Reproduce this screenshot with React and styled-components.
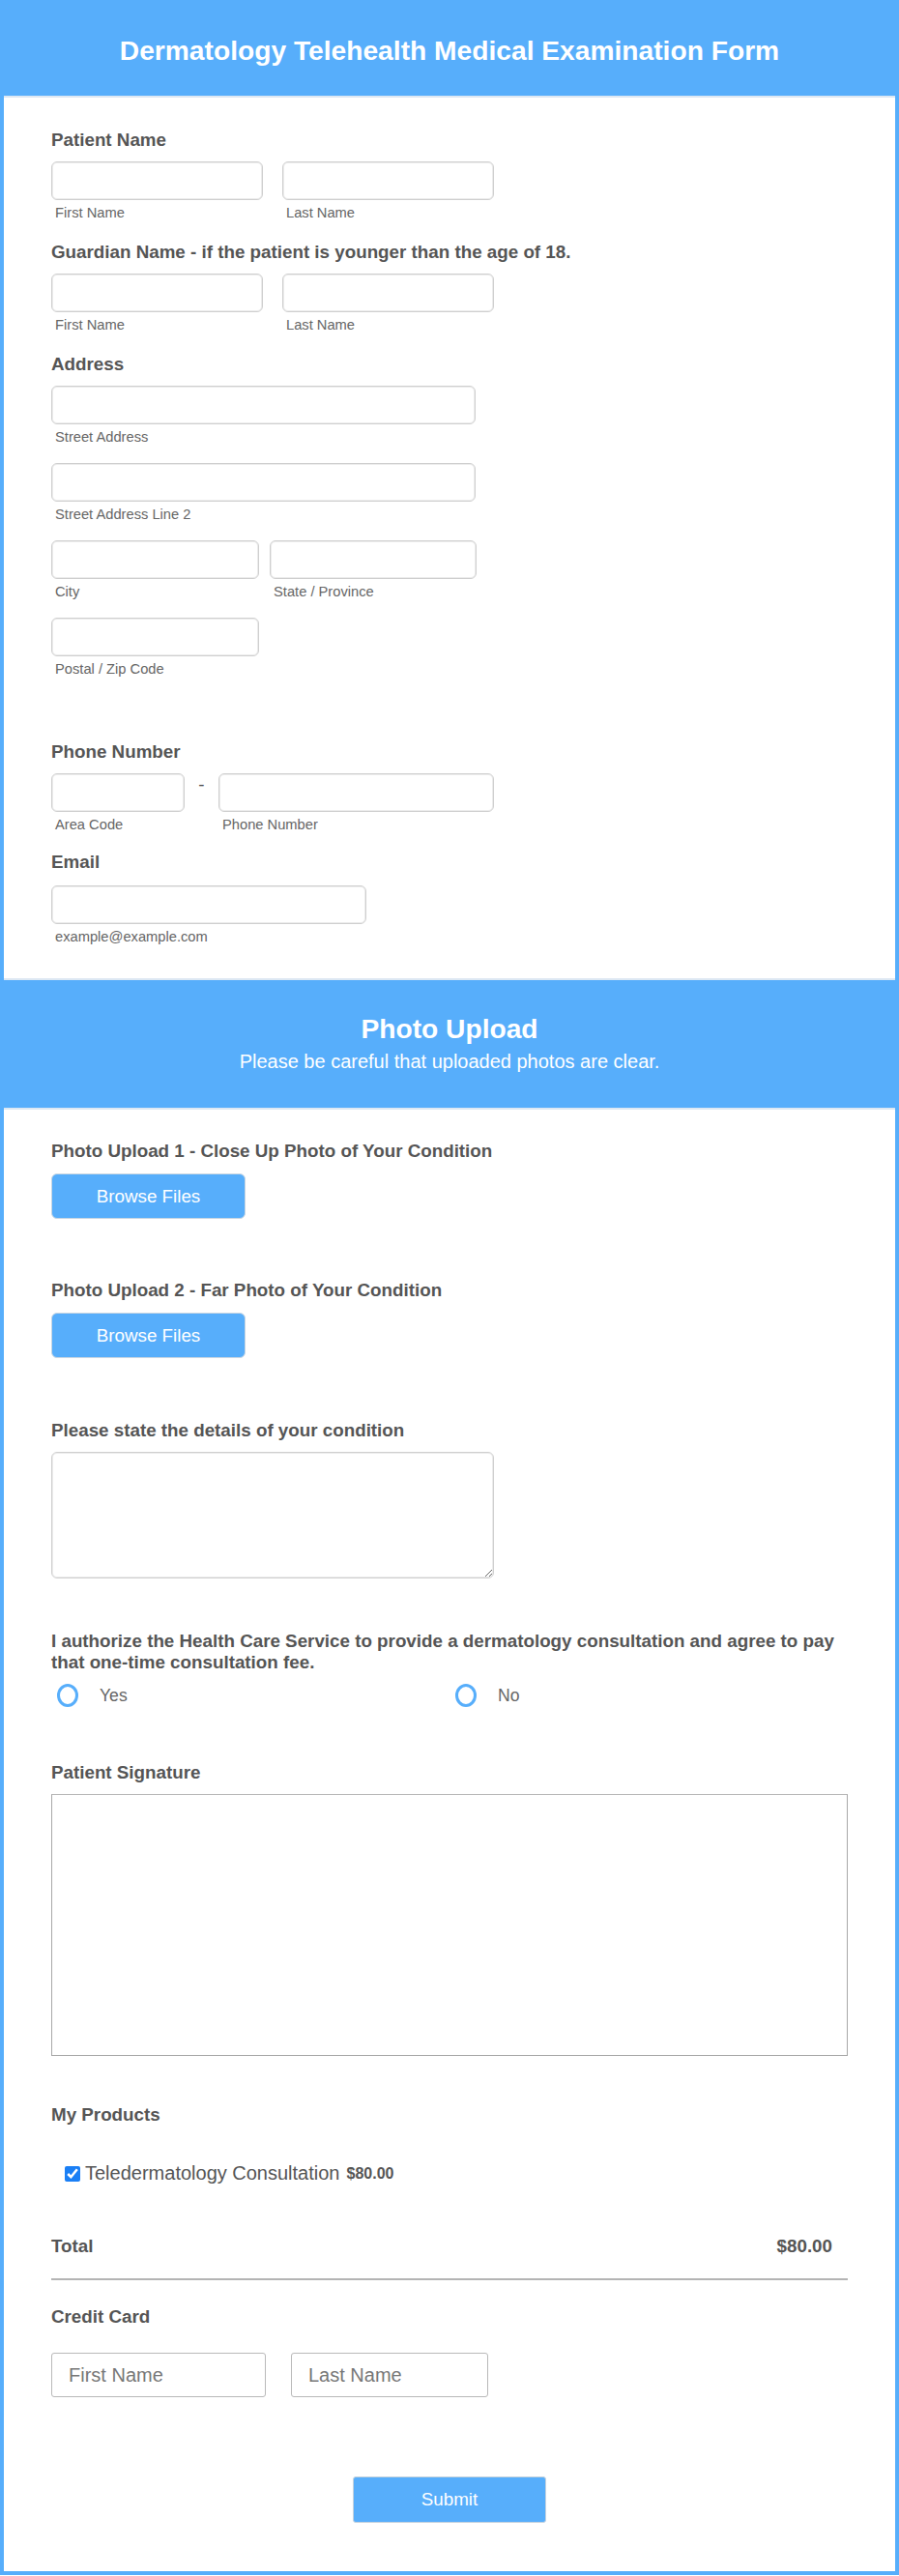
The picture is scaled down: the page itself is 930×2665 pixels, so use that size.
import React from 'react';
import styled, { createGlobalStyle } from 'styled-components';

const GlobalStyle = createGlobalStyle`
  * { box-sizing: border-box; }
  body {
    margin: 0;
    background: #fff;
    font-family: "Liberation Sans", Arial, Helvetica, sans-serif;
  }
`;

const BLUE = '#57aefb';

const FormShell = styled.form`
  width: 930px;
  border: 4px solid ${BLUE};
  background: #fff;
`;

const Band = styled.div`
  background: ${BLUE};
  color: #fff;
  text-align: center;
  border-top: ${(p) => (p.$topLine ? '2px solid #dde8f3' : 'none')};
  border-bottom: 2px solid #dde8f3;
  padding: ${(p) => p.$pad};
`;

const BandTitle = styled.h1`
  margin: 0;
  font-size: 28.2px;
  line-height: 34px;
  font-weight: 700;
`;

const BandSub = styled.div`
  margin-top: 5px;
  font-size: 20px;
  line-height: 24px;
`;

const Section = styled.div`
  padding: ${(p) => p.$pad};
`;

const Field = styled.div`
  margin-top: ${(p) => p.$mt || 0}px;
`;

const Label = styled.div`
  font-size: 18.8px;
  line-height: 22px;
  font-weight: 700;
  color: #555;
  margin-bottom: ${(p) => (p.$mb === undefined ? 11 : p.$mb)}px;
`;

const Row = styled.div`
  display: flex;
  gap: ${(p) => p.$gap || 0}px;
  margin-top: ${(p) => p.$mt || 0}px;
`;

const Cell = styled.div`
  width: ${(p) => p.$w}px;
`;

const TextBox = styled.input`
  display: block;
  width: 100%;
  height: 40px;
  border: 1px solid #cfcfcf;
  box-shadow: inset 0 0 0 1px #ececec;
  border-radius: 6px;
  background: #fff;
  outline: none;
`;

const SubLabel = styled.div`
  margin-top: 4px;
  padding-left: 4px;
  font-size: 14.7px;
  line-height: 18px;
  color: #666;
`;

const Dash = styled.div`
  width: 35px;
  text-align: center;
  padding-top: 1px;
  font-size: 18.8px;
  line-height: 22px;
  color: #555;
`;

const BrowseButton = styled.button`
  display: block;
  width: 201px;
  height: 47px;
  border: 1px solid #c9d6e2;
  border-radius: 6px;
  background: ${BLUE};
  color: #fff;
  font-family: inherit;
  font-size: 18.8px;
`;

const Details = styled.textarea`
  display: block;
  width: 458px;
  height: 131px;
  border: 1px solid #cfcfcf;
  box-shadow: inset 0 0 0 1px #ececec;
  border-radius: 6px;
  outline: none;
`;

const RadioGrid = styled.div`
  display: grid;
  grid-template-columns: 412px 412px;
  height: 24px;
`;

const RadioOption = styled.label`
  display: flex;
  align-items: center;
  padding-left: 6px;
  font-size: 17.6px;
  color: #666;
`;

const RadioCircle = styled.span`
  width: 22px;
  height: 24px;
  border: 3px solid ${BLUE};
  border-radius: 50%;
  background: #fff;
  margin-right: 22px;
`;

const SignaturePad = styled.div`
  width: 824px;
  height: 271px;
  border: 1px solid #a8a8a8;
  border-top-color: #b8b8b8;
  background: #fff;
`;

const ProductRow = styled.label`
  display: flex;
  align-items: center;
  height: 24px;
  padding-left: 14px;
  font-size: 20px;
  color: #555;
`;

const ProductCheck = styled.input`
  width: 16px;
  height: 16px;
  margin: 2px 5px 0 0;
  accent-color: #1a7ff5;
`;

const Price = styled.b`
  font-size: 16px;
  margin-left: 7px;
  margin-top: 2px;
`;

const TotalRow = styled.div`
  display: flex;
  justify-content: space-between;
  padding-right: 16px;
  font-size: 18.8px;
  line-height: 22px;
  font-weight: 700;
  color: #555;
`;

const Divider = styled.hr`
  margin: 22px 0 0;
  border: none;
  border-top: 2px solid #b4b4b4;
`;

const CardBox = styled.input`
  width: ${(p) => p.$w}px;
  height: 46px;
  border: 1px solid #b9b9b9;
  border-radius: 3px;
  padding-left: 17px;
  font-family: inherit;
  font-size: 20px;
  color: #555;
  outline: none;
  &::placeholder { color: #777; }
`;

const SubmitBar = styled.div`
  display: flex;
  justify-content: center;
  margin-top: 82px;
`;

const SubmitButton = styled.button`
  width: 200px;
  height: 48px;
  border: 1px solid #c4d2de;
  border-radius: 3px;
  background: ${BLUE};
  color: #fff;
  font-family: inherit;
  font-size: 18.8px;
`;

const InputWithSub = ({ w, sub }) => (
  <Cell $w={w}>
    <TextBox />
    {sub && <SubLabel>{sub}</SubLabel>}
  </Cell>
);

const App = () => (
  <>
    <GlobalStyle />
    <FormShell onSubmit={(e) => e.preventDefault()}>
      <Band $pad="31px 0 30px">
        <BandTitle>Dermatology Telehealth Medical Examination Form</BandTitle>
      </Band>

      <Section $pad="33px 49px 34px">
        <Field>
          <Label>Patient Name</Label>
          <Row $gap={20}>
            <InputWithSub w={219} sub="First Name" />
            <InputWithSub w={219} sub="Last Name" />
          </Row>
        </Field>

        <Field $mt={21}>
          <Label>Guardian Name - if the patient is younger than the age of 18.</Label>
          <Row $gap={20}>
            <InputWithSub w={219} sub="First Name" />
            <InputWithSub w={219} sub="Last Name" />
          </Row>
        </Field>

        <Field $mt={21}>
          <Label>Address</Label>
          <Row>
            <InputWithSub w={439} sub="Street Address" />
          </Row>
          <Row $mt={18}>
            <InputWithSub w={439} sub="Street Address Line 2" />
          </Row>
          <Row $mt={18} $gap={11}>
            <InputWithSub w={215} sub="City" />
            <InputWithSub w={214} sub="State / Province" />
          </Row>
          <Row $mt={18}>
            <InputWithSub w={215} sub="Postal / Zip Code" />
          </Row>
        </Field>

        <Field $mt={66}>
          <Label>Phone Number</Label>
          <Row>
            <InputWithSub w={138} sub="Area Code" />
            <Dash>-</Dash>
            <InputWithSub w={285} sub="Phone Number" />
          </Row>
        </Field>

        <Field $mt={19}>
          <Label $mb={13}>Email</Label>
          <Row>
            <InputWithSub w={326} sub="example@example.com" />
          </Row>
        </Field>
      </Section>

      <Band $topLine $pad="33px 0 36px">
        <BandTitle>Photo Upload</BandTitle>
        <BandSub>Please be careful that uploaded photos are clear.</BandSub>
      </Band>

      <Section $pad="32px 49px 50px">
        <Field>
          <Label $mb={12}>Photo Upload 1 - Close Up Photo of Your Condition</Label>
          <BrowseButton type="button">Browse Files</BrowseButton>
        </Field>

        <Field $mt={63}>
          <Label $mb={12}>Photo Upload 2 - Far Photo of Your Condition</Label>
          <BrowseButton type="button">Browse Files</BrowseButton>
        </Field>

        <Field $mt={64}>
          <Label>Please state the details of your condition</Label>
          <Details />
        </Field>

        <Field $mt={54}>
          <Label>
            I authorize the Health Care Service to provide a dermatology consultation and agree to pay
            that one-time consultation fee.
          </Label>
          <RadioGrid>
            <RadioOption>
              <RadioCircle />
              Yes
            </RadioOption>
            <RadioOption>
              <RadioCircle />
              No
            </RadioOption>
          </RadioGrid>
        </Field>

        <Field $mt={57}>
          <Label>Patient Signature</Label>
          <SignaturePad />
        </Field>

        <Field $mt={50}>
          <Label $mb={0}>My Products</Label>
        </Field>

        <Field $mt={37}>
          <ProductRow>
            <ProductCheck type="checkbox" defaultChecked />
            Teledermatology Consultation
            <Price>$80.00</Price>
          </ProductRow>
        </Field>

        <Field $mt={53}>
          <TotalRow>
            <span>Total</span>
            <span>$80.00</span>
          </TotalRow>
          <Divider />
        </Field>

        <Field $mt={27}>
          <Label $mb={26}>Credit Card</Label>
          <Row $gap={26}>
            <CardBox $w={222} placeholder="First Name" />
            <CardBox $w={204} placeholder="Last Name" />
          </Row>
        </Field>

        <SubmitBar>
          <SubmitButton type="submit">Submit</SubmitButton>
        </SubmitBar>
      </Section>
    </FormShell>
  </>
);

export default App;
